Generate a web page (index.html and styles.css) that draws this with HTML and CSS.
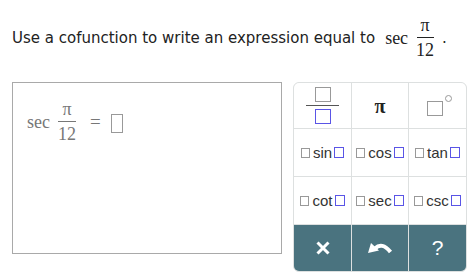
FILE: index.html
```html
<!DOCTYPE html>
<html lang="en">
<head>
  <meta charset="UTF-8">
  <title>Cofunction</title>
  <link rel="stylesheet" href="styles.css">
</head>
<body>
  <div class="question">
    <span class="prompt">Use a cofunction to write an expression equal to</span>
    <span class="math">
      <span class="fn">sec</span>
      <span class="frac">
        <span class="num">π</span>
        <span class="den">12</span>
      </span>
    </span>
    <span class="dot">.</span>
  </div>

  <div class="work">
    <div class="answer">
      <div class="math grey">
        <span class="fn">sec</span>
        <span class="frac">
          <span class="num">π</span>
          <span class="den">12</span>
        </span>
        <span class="eq">=</span>
        <span class="slot"></span>
      </div>
    </div>

    <div class="keypad">
      <button class="key">
        <span class="fracicon">
          <span class="box grey-box"></span>
          <span class="bar"></span>
          <span class="box blue-box"></span>
        </span>
      </button>
      <button class="key pi">π</button>
      <button class="key">
        <span class="degicon">
          <span class="box grey-box"></span>
          <span class="ring"></span>
        </span>
      </button>

      <button class="key trig"><span class="sm grey-box"></span>sin<span class="sm blue-box"></span></button>
      <button class="key trig"><span class="sm grey-box"></span>cos<span class="sm blue-box"></span></button>
      <button class="key trig"><span class="sm grey-box"></span>tan<span class="sm blue-box"></span></button>

      <button class="key trig"><span class="sm grey-box"></span>cot<span class="sm blue-box"></span></button>
      <button class="key trig"><span class="sm grey-box"></span>sec<span class="sm blue-box"></span></button>
      <button class="key trig"><span class="sm grey-box"></span>csc<span class="sm blue-box"></span></button>

      <button class="key dark">
        <svg width="16" height="16" viewBox="0 0 16 16">
          <path d="M2.5 2.5 L13.5 13.5 M13.5 2.5 L2.5 13.5" stroke="#fff" stroke-width="3" fill="none"/>
        </svg>
      </button>
      <button class="key dark">
        <svg width="26" height="16" viewBox="0 0 26 16">
          <path d="M8 8.5 Q15 1.5 23.5 12" stroke="#fff" stroke-width="4" fill="none"/>
          <polygon points="1,13 4,3 12,10.5" fill="#fff"/>
        </svg>
      </button>
      <button class="key dark q">?</button>
    </div>
  </div>
</body>
</html>
```

FILE: styles.css
```css
body {
  margin: 0;
  background: #fff;
  font-family: 'DejaVu Sans', Verdana, sans-serif;
  color: #222;
}

.question {
  display: flex;
  align-items: center;
  height: 74px;
  padding-left: 12px;
  font-size: 15px;
}

.prompt {
  margin-right: 10px;
  position: relative;
  top: 1px;
}

.math {
  display: inline-flex;
  align-items: center;
  font-family: 'Liberation Serif', 'Times New Roman', serif;
  font-size: 18px;
}

.fn {
  margin-right: 4px;
  position: relative;
  top: 1px;
}

.frac {
  display: inline-flex;
  flex-direction: column;
  align-items: center;
  line-height: 18px;
}

.frac .num {
  padding: 0 4px 3px;
  border-bottom: 1px solid currentColor;
}

.frac .den {
  padding: 3px 4px 0;
}

.dot {
  margin-left: 4px;
  font-size: 15px;
  position: relative;
  top: 1px;
}

.work {
  display: flex;
  align-items: flex-start;
  gap: 11px;
  padding-left: 12px;
  margin-top: 8px;
}

.answer {
  width: 270px;
  height: 172px;
  border: 1px solid #a9a9a9;
  padding: 17px 0 0 14px;
  box-sizing: border-box;
}

.grey {
  color: #777;
}

.eq {
  margin: 0 10px 0 10px;
  font-size: 19px;
}

.slot {
  width: 10px;
  height: 17px;
  border: 1px solid #999;
  position: relative;
  top: 2px;
}

.keypad {
  display: grid;
  grid-template-columns: 57px 56px 57px;
  grid-template-rows: 45px 47px 47px 46px;
  gap: 1px;
  background: #dde0e0;
  border: 1px solid #dde0e0;
  border-radius: 6px;
  overflow: hidden;
}

.key {
  display: flex;
  align-items: center;
  justify-content: center;
  background: #fff;
  border: none;
  padding: 0;
  margin: 0;
  font-family: 'Liberation Sans', Arial, sans-serif;
  color: #333;
}

.box {
  display: block;
  width: 14px;
  height: 13px;
}

.grey-box {
  border: 1.5px solid #999;
}

.blue-box {
  border: 1.5px solid #5a55e6;
}

.fracicon {
  display: flex;
  flex-direction: column;
  align-items: center;
  gap: 3px;
}

.bar {
  display: block;
  width: 33px;
  height: 1.5px;
  background: #555;
}

.pi {
  font-family: 'Liberation Serif', 'Times New Roman', serif;
  font-weight: bold;
  font-size: 20px;
  color: #222;
  padding-top: 2px;
}

.degicon {
  display: flex;
  align-items: flex-start;
  gap: 2px;
  margin-left: 4px;
}

.degicon .box {
  margin-top: 6px;
}

.ring {
  display: block;
  width: 5px;
  height: 5px;
  border: 1.5px solid #999;
  border-radius: 50%;
}

.trig {
  font-size: 15px;
  color: #333;
}

.sm {
  display: inline-block;
  width: 8px;
  height: 9px;
}

.sm.grey-box {
  margin-right: 3px;
  border-width: 1px;
  width: 7px;
  height: 8px;
}

.sm.blue-box {
  margin-left: 2px;
}

.dark {
  background: #4a737f;
}

.q {
  font-size: 21px;
  color: #fff;
}
```
